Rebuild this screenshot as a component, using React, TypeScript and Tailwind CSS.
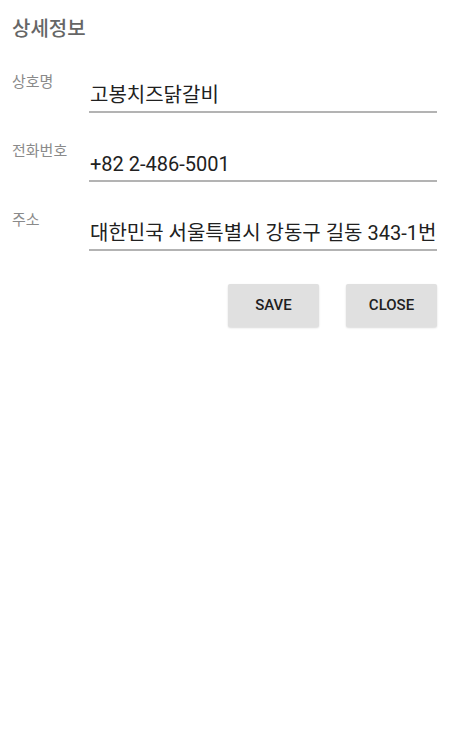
import React from "react";

const fields = [
  { label: "상호명", value: "고봉치즈닭갈비" },
  { label: "전화번호", value: "+82 2-486-5001" },
  { label: "주소", value: "대한민국 서울특별시 강동구 길동 343-1번지" },
];

export default function App() {
  return (
    <div
      className="w-[451px] h-[733px] bg-white pl-3 pr-[14px] pt-[15px]"
      style={{ fontFamily: 'Roboto, "Noto Sans CJK KR", sans-serif' }}
    >
      <h2 className="text-[20px] leading-[28px] font-medium text-[#666666]">상세정보</h2>

      <div className="mt-[28px] flex flex-col gap-[27px]">
        {fields.map((f) => (
          <div key={f.label} className="flex items-start">
            <div className="w-[77px] shrink-0 text-[15px] leading-[22px] text-[#8a8a8a]">{f.label}</div>
            <div className="flex-1 min-w-0 mt-[8px] border-b-2 border-[#b3b3b3]">
              <input
                className="w-full bg-transparent outline-none text-[20px] leading-[32px] h-[32px] text-[#212121] pl-[1px]"
                defaultValue={f.value}
              />
            </div>
          </div>
        ))}
      </div>

      <div className="mt-[33px] flex justify-end gap-[27px]">
        <button className="w-[91px] h-[43px] rounded-[2px] bg-[#e0e0e0] shadow-[0_1px_2px_rgba(0,0,0,0.15)] text-[15px] font-medium text-[#212121]">
          SAVE
        </button>
        <button className="w-[91px] h-[43px] rounded-[2px] bg-[#e0e0e0] shadow-[0_1px_2px_rgba(0,0,0,0.15)] text-[15px] font-medium text-[#212121]">
          CLOSE
        </button>
      </div>
    </div>
  );
}
